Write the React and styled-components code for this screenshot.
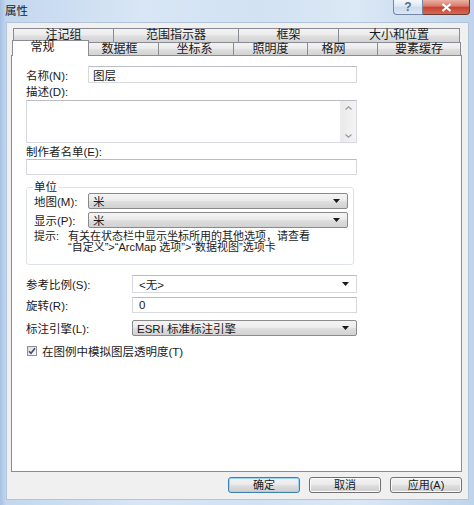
import React from "react";
import styled, { createGlobalStyle } from "styled-components";

const GlobalStyle = createGlobalStyle`
  html, body {
    margin: 0;
    padding: 0;
    background: #c9dbef;
  }
  body {
    font-family: "Liberation Sans", "Noto Sans CJK SC", sans-serif;
    color: #1a1a1a;
  }
  * { box-sizing: border-box; }
`;

const Window = styled.div`
  width: 474px;
  height: 505px;
  display: flex;
  flex-direction: column;
  overflow: hidden;
  background: linear-gradient(to right, #a6c1e2 0, #c3d7ee 6px, #d8e6f5 30%, #d2e2f3 55%, #dbe8f5 75%, #bfd4ec 100%);
`;

const TitleBar = styled.div`
  height: 22px;
  display: flex;
  align-items: flex-start;
  padding: 0 4px 0 5px;
`;

const Title = styled.div`
  flex: 1;
  font-size: 11.5px;
  line-height: 23px;
  color: #1b1b1b;
`;

const CaptionButton = styled.div`
  height: 15px;
  width: ${(p) => p.$w}px;
  display: flex;
  align-items: center;
  justify-content: center;
  border: 1px solid ${(p) => (p.$close ? "#6b3b36" : "#7488a4")};
  border-top: none;
  border-left: ${(p) => (p.$close ? "none" : "1px solid #7488a4")};
  border-radius: ${(p) => (p.$close ? "0 0 4px 0" : "0 0 0 4px")};
  background: ${(p) =>
    p.$close
      ? "linear-gradient(#eab0a4, #d9786a 45%, #c6412f 50%, #d66a55)"
      : "linear-gradient(#f4f8fc, #dde8f4 45%, #cbdaec 50%, #dbe7f5)"};
  color: #5b6d88;
  font-size: 12px;
  font-weight: bold;
`;

const Client = styled.div`
  flex: 1;
  margin: 0 5px 5px 6px;
  background: #f0f0f0;
  border: 1px solid #b3c4d9;
  padding: 5px 6px 6px 4px;
  display: flex;
  flex-direction: column;
`;

const TabRow = styled.div`
  display: flex;
  height: ${(p) => p.$h}px;
  align-items: flex-end;
  margin-left: ${(p) => p.$ml}px;
`;

const Tab = styled.div`
  width: ${(p) => p.$w}px;
  height: ${(p) => (p.$active ? 16 : p.$h)}px;
  margin-bottom: ${(p) => (p.$active ? -1 : 0)}px;
  border-top: 1px solid #898c95;
  border-right: 1px solid #898c95;
  border-left: ${(p) => (p.$first ? "1px solid #898c95" : "none")};
  background: ${(p) =>
    p.$active ? "#ffffff" : "linear-gradient(#f3f3f3, #ebebeb 45%, #dedede 55%, #d3d3d3)"};
  position: relative;
  z-index: ${(p) => (p.$active ? 2 : 1)};
  font-size: 12px;
  line-height: ${(p) => (p.$active ? 13 : p.$h - 1)}px;
  text-align: center;
  padding-right: ${(p) => p.$shift || 0}px;
  white-space: nowrap;
  color: #1a1a1a;
`;

const Panel = styled.div`
  height: 417px;
  background: #ffffff;
  border: 1px solid #898c95;
  padding: 0 0 0 14px;
  display: flex;
  flex-direction: column;
  font-size: 11.5px;
`;

const Row = styled.div`
  display: flex;
  align-items: center;
  height: ${(p) => p.$h}px;
  margin-top: ${(p) => p.$mt || 0}px;
`;

const Label = styled.div`
  width: ${(p) => p.$w}px;
  flex: none;
  white-space: nowrap;
`;

const FieldLabel = styled.div`
  line-height: ${(p) => p.$lh}px;
  margin-top: ${(p) => p.$mt || 0}px;
`;

const TextBox = styled.div`
  width: ${(p) => p.$w}px;
  height: ${(p) => p.$h}px;
  margin-top: ${(p) => p.$mt || 0}px;
  border: 1px solid #d6dadf;
  border-top-color: #b9bdc3;
  background: #fff;
  padding-left: ${(p) => p.$pl || 4}px;
  display: flex;
  align-items: center;
  justify-content: space-between;
  white-space: nowrap;
`;

const MultiLine = styled.div`
  width: 331px;
  height: 43px;
  margin-top: ${(p) => p.$mt}px;
  border: 1px solid #d6dadf;
  border-top-color: #b9bdc3;
  display: flex;
  justify-content: flex-end;
`;

const ScrollBar = styled.div`
  width: 16px;
  height: 100%;
  background: linear-gradient(to right, #e9e9e9, #f4f4f4);
  border-left: 1px solid #ececec;
  display: flex;
  flex-direction: column;
  justify-content: space-between;
  align-items: center;
  padding: 5px 0 4px;
`;

const DropList = styled.div`
  width: ${(p) => p.$w}px;
  height: 16px;
  border: 1px solid #8a8a8a;
  border-radius: 2px;
  background: linear-gradient(#f4f4f4, #ececec 45%, #dddddd 55%, #d2d2d2);
  padding: 0 7px 0 4px;
  display: flex;
  align-items: center;
  justify-content: space-between;
  white-space: nowrap;
`;

const Group = styled.fieldset`
  width: 328px;
  margin: 6px 0 0 0;
  padding: 0 5px 11px 7px;
  border: 1px solid #dde3e9;
  border-radius: 3px;
`;

const Legend = styled.legend`
  padding: 0 1px;
  margin-left: -1px;
  line-height: 12px;
  font-size: 11.5px;
`;

const Hint = styled.div`
  display: flex;
  margin-top: 3px;
  line-height: 11px;
  font-size: 11px;
  white-space: nowrap;
`;

const HintLead = styled.span`
  width: 34px;
  flex: none;
`;

const CheckBox = styled.div`
  width: 10px;
  height: 10px;
  margin: 0 5px 0 1px;
  border: 1px solid #8f8f8f;
  background: linear-gradient(135deg, #dcdcdc, #fbfbfb);
  display: flex;
  align-items: center;
  justify-content: center;
`;

const ButtonRow = styled.div`
  display: flex;
  justify-content: flex-end;
  gap: 9px;
  margin-top: 5px;
`;

const Button = styled.div`
  width: 72px;
  height: 16px;
  border: 1px solid ${(p) => (p.$default ? "#3c7fb1" : "#707070")};
  border-radius: 3px;
  background: linear-gradient(#f2f2f2, #ebebeb 45%, #dddddd 55%, #cfcfcf);
  box-shadow: ${(p) => (p.$default ? "inset 0 0 0 1px #9fd5f4" : "inset 0 0 0 1px #fbfbfb")};
  font-size: 11px;
  line-height: 14px;
  text-align: center;
  color: #1a1a1a;
`;

const DownArrow = () => (
  <svg width="7" height="4" viewBox="0 0 7 4">
    <path d="M0 0H7L3.5 4Z" fill="#1a1a1a" />
  </svg>
);

const Chevron = ({ up }) => (
  <svg width="7" height="4" viewBox="0 0 7 4">
    <path d={up ? "M0.5 3.5L3.5 0.8L6.5 3.5" : "M0.5 0.5L3.5 3.2L6.5 0.5"} fill="none" stroke="#9a9a9a" strokeWidth="1.2" />
  </svg>
);

const topTabs = [
  { t: "注记组", w: 101 },
  { t: "范围指示器", w: 125 },
  { t: "框架", w: 100 },
  { t: "大小和位置", w: 121 },
];

const frontTabs = [
  { t: "常规", w: 77, active: true, shift: 16 },
  { t: "数据框", w: 70, shift: 8 },
  { t: "坐标系", w: 75, shift: 3 },
  { t: "照明度", w: 74 },
  { t: "格网", w: 70, shift: 18 },
  { t: "要素缓存", w: 83 },
];

export default function App() {
  return (
    <Window>
      <GlobalStyle />
      <TitleBar>
        <Title>属性</Title>
        <CaptionButton $w={30}>?</CaptionButton>
        <CaptionButton $w={47} $close>
          <svg width="11" height="9" viewBox="0 0 11 9">
            <path d="M1.5 1L9.5 8M9.5 1L1.5 8" stroke="#ffffff" strokeWidth="2.2" />
          </svg>
        </CaptionButton>
      </TitleBar>
      <Client>
        <TabRow $h={14} $ml={2}>
          {topTabs.map((tab, i) => (
            <Tab key={tab.t} $w={tab.w} $h={14} $first={i === 0}>
              {tab.t}
            </Tab>
          ))}
        </TabRow>
        <TabRow $h={13} $ml={1}>
          {frontTabs.map((tab, i) => (
            <Tab key={tab.t} $w={tab.w} $h={13} $first={i === 0} $active={tab.active} $shift={tab.shift}>
              {tab.t}
            </Tab>
          ))}
        </TabRow>
        <Panel>
          <Row $h={17} $mt={10}>
            <Label $w={62}>名称(N):</Label>
            <TextBox $w={269} $h={17}>图层</TextBox>
          </Row>
          <FieldLabel $lh={14} $mt={2}>描述(D):</FieldLabel>
          <MultiLine $mt={1}>
            <ScrollBar>
              <Chevron up />
              <Chevron />
            </ScrollBar>
          </MultiLine>
          <FieldLabel $lh={13} $mt={3}>制作者名单(E):</FieldLabel>
          <TextBox $w={331} $h={16} />
          <Group>
            <Legend>单位</Legend>
            <Row $h={16}>
              <Label $w={54}>地图(M):</Label>
              <DropList $w={260}>
                米
                <DownArrow />
              </DropList>
            </Row>
            <Row $h={16} $mt={3}>
              <Label $w={54}>显示(P):</Label>
              <DropList $w={260}>
                米
                <DownArrow />
              </DropList>
            </Row>
            <Hint>
              <HintLead>提示:</HintLead>
              <span>
                有关在状态栏中显示坐标所用的其他选项，请查看
                <br />
                “自定义”&gt;“ArcMap 选项”&gt;“数据视图”选项卡
              </span>
            </Hint>
          </Group>
          <Row $h={18} $mt={10}>
            <Label $w={106}>参考比例(S):</Label>
            <TextBox $w={225} $h={18} $pl={6}>
              &lt;无&gt;
              <span style={{ marginRight: 7, display: "flex" }}>
                <DownArrow />
              </span>
            </TextBox>
          </Row>
          <Row $h={16} $mt={4}>
            <Label $w={106}>旋转(R):</Label>
            <TextBox $w={225} $h={16} $pl={6}>0</TextBox>
          </Row>
          <Row $h={16} $mt={7}>
            <Label $w={106}>标注引擎(L):</Label>
            <DropList $w={225}>
              ESRI 标准标注引擎
              <DownArrow />
            </DropList>
          </Row>
          <Row $h={14} $mt={8}>
            <CheckBox>
              <svg width="8" height="8" viewBox="0 0 8 8">
                <path d="M1 4.2L3 6.3L7 1.2" fill="none" stroke="#3a4f7a" strokeWidth="1.6" />
              </svg>
            </CheckBox>
            在图例中模拟图层透明度(T)
          </Row>
        </Panel>
        <ButtonRow>
          <Button $default>确定</Button>
          <Button>取消</Button>
          <Button>应用(A)</Button>
        </ButtonRow>
      </Client>
    </Window>
  );
}
